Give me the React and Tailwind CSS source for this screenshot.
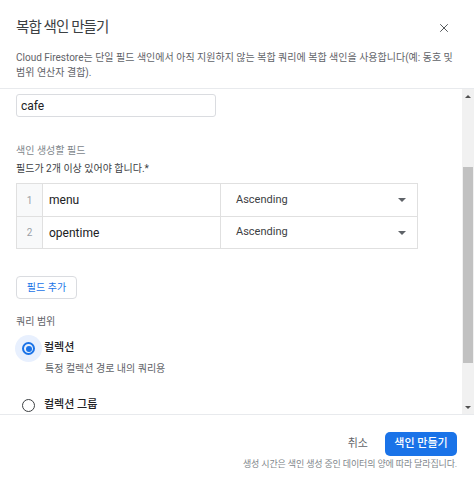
import { X } from 'lucide-react';

const font = { fontFamily: 'Roboto, "Noto Sans CJK KR", sans-serif' };

const rows = [
  { n: 1, field: 'menu', order: 'Ascending' },
  { n: 2, field: 'opentime', order: 'Ascending' },
];

const Caret = () => (
  <svg width="8" height="4" viewBox="0 0 8 4" className="fill-[#5f6368]">
    <path d="M0 0h8L4 4z" />
  </svg>
);

const Radio = ({ checked }) => (
  <div className={`w-[27px] h-[27px] rounded-full flex items-center justify-center shrink-0 ${checked ? 'bg-[#e8f0fe]' : ''}`}>
    <div className={`w-[13px] h-[13px] rounded-full flex items-center justify-center ${checked ? 'border-2 border-[#1a73e8]' : 'border-[1.5px] border-[#3c4043]'}`}>
      {checked && <div className="w-[6px] h-[6px] rounded-full bg-[#1a73e8]" />}
    </div>
  </div>
);

const App = () => {
  return (
    <div className="w-[474px] h-[482px] bg-white overflow-hidden flex flex-col" style={font}>
      {/* Header */}
      <div className="flex items-center justify-between h-[50px] pl-4 pr-[23px] pt-[5px]">
        <h2 className="text-[14.5px] text-[#3c4043] tracking-[-0.9px]">복합 색인 만들기</h2>
        <X size={14} strokeWidth={1.5} className="text-[#3c4043]" />
      </div>
      <p className="px-4 text-[10px] leading-[15px] text-[#5f6368] pb-2">
        Cloud Firestore는 단일 필드 색인에서 아직 지원하지 않는 복합 쿼리에 복합 색인을 사용합니다(예: 동호 및
        <br />
        범위 연산자 결합).
      </p>

      {/* Scroll area */}
      <div className="flex h-[327px] border-y border-[#e8eaed]">
        <div className="flex-1 overflow-hidden pl-4 pt-[5px]">
          <div className="w-[200px] h-[23px] border border-[#dadce0] rounded-[3px] flex items-center px-1 text-[12px] text-[#202124]">
            cafe
          </div>

          <div className="mt-[27px] text-[10px] leading-[14px] text-[#80868b]">색인 생성할 필드</div>
          <div className="mt-[4px] text-[10px] leading-[14px] text-[#3c4043]">필드가 2개 이상 있어야 합니다.*</div>

          <div className="mt-[7px] w-[402px] border border-[#e0e0e0]">
            {rows.map((r, i) => (
              <div key={r.n} className={`flex h-[32px] ${i > 0 ? 'border-t border-[#e0e0e0]' : ''}`}>
                <div className="w-[26px] bg-[#f8f9fa] border-r border-[#e0e0e0] flex items-center justify-center text-[10px] text-[#9aa0a6]">
                  {r.n}
                </div>
                <div className="w-[178px] border-r border-[#e0e0e0] flex items-center pl-[6px] text-[12px] text-[#202124]">
                  {r.field}
                </div>
                <div className="flex-1 flex items-center justify-between pl-[15px] pr-[11px] text-[11px] text-[#3c4043]">
                  {r.order}
                  <Caret />
                </div>
              </div>
            ))}
          </div>

          <button className="mt-[27px] h-[23px] w-[61px] border border-[#dadce0] rounded-[4px] text-[10px] text-[#1a73e8]">
            필드 추가
          </button>

          <div className="mt-[16px] text-[10px] leading-[14px] text-[#5f6368]">쿼리 범위</div>

          <div className="mt-[6px] flex items-center gap-[2px] -ml-px">
            <Radio checked />
            <span className="text-[11px] font-medium text-[#202124]">컬렉션</span>
          </div>
          <div className="pl-[29px] text-[10px] leading-[14px] text-[#5f6368]">특정 컬렉션 경로 내의 쿼리용</div>

          <div className="mt-[16px] flex items-center gap-[2px] -ml-px">
            <Radio />
            <span className="text-[11px] font-medium text-[#202124]">컬렉션 그룹</span>
          </div>
        </div>

        {/* Scrollbar */}
        <div className="w-[12px] bg-[#f1f1f1] flex flex-col items-center">
          <div className="h-[14px] flex items-center justify-center">
            <svg width="6" height="3" viewBox="0 0 6 3" className="fill-[#505050]"><path d="M0 3h6L3 0z" /></svg>
          </div>
          <div className="mt-[64px] w-[10px] h-[196px] bg-[#c1c1c1]" />
          <div className="flex-1" />
          <div className="h-[14px] flex items-center justify-center">
            <svg width="6" height="3" viewBox="0 0 6 3" className="fill-[#505050]"><path d="M0 0h6L3 3z" /></svg>
          </div>
        </div>
      </div>

      {/* Footer */}
      <div className="flex flex-col items-end pr-[17px] pt-[17px]">
        <div className="flex items-center gap-[15px]">
          <button className="text-[11px] text-[#5f6368] px-[2px]">취소</button>
          <button className="h-[24px] w-[72px] rounded-[5px] bg-[#1a73e8] text-white text-[11px] font-medium">
            색인 만들기
          </button>
        </div>
        <p className="mt-[2px] text-[9px] leading-[12px] text-[#80868b] tracking-[-0.15px]">
          생성 시간은 색인 생성 중인 데이터의 양에 따라 달라집니다.
        </p>
      </div>
    </div>
  );
};

export default App;
